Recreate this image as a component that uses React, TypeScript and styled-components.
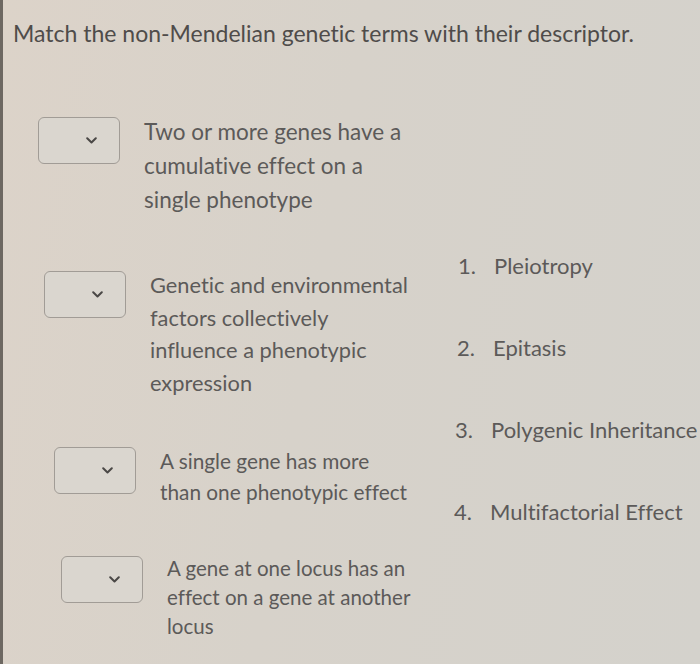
import React from 'react';
import styled, { createGlobalStyle } from 'styled-components';

const GlobalStyle = createGlobalStyle`
  html, body {
    margin: 0;
    padding: 0;
  }
  body {
    font-family: Lato, "Open Sans", "Liberation Sans", sans-serif;
    font-variant-ligatures: none;
  }
`;

const Page = styled.div`
  width: 700px;
  height: 664px;
  overflow: hidden;
  box-sizing: border-box;
  border-left: 3px solid #6d6862;
  background: linear-gradient(100deg, #dcd3c9 0%, #d7d2ca 45%, #d4d2cc 100%);
  color: #5a5857;
`;

const Title = styled.h1`
  margin: 0;
  padding: 18px 0 0 10px;
  font-size: 23px;
  font-weight: 400;
  line-height: 30px;
  color: #4f4c4a;
  white-space: nowrap;
`;

const Body = styled.div`
  display: grid;
  grid-template-columns: 410px 1fr;
  margin-top: 69px;
`;

const Prompts = styled.div`
  display: grid;
  grid-template-rows: 154px 176px 109px auto;
`;

const PromptRow = styled.div<{ $indent: number }>`
  display: flex;
  align-items: flex-start;
  padding-left: ${(p) => p.$indent}px;
`;

const Select = styled.div`
  flex: none;
  display: flex;
  align-items: center;
  justify-content: flex-end;
  width: 82px;
  height: 47px;
  box-sizing: border-box;
  padding-right: 22px;
  border: 1.5px solid #a19c96;
  border-radius: 6px;
  background: #dad6cf;
`;

const Descriptor = styled.div<{ $size: number; $leading: number }>`
  margin: -2px 0 0 24px;
  font-size: ${(p) => p.$size}px;
  line-height: ${(p) => p.$leading}px;
  color: #5c5a59;
  white-space: nowrap;
`;

const Terms = styled.ol`
  list-style: none;
  margin: 0;
  padding: 133px 0 0 43px;
  display: flex;
  flex-direction: column;
  gap: 50px;
`;

const Term = styled.li<{ $shift: number }>`
  display: flex;
  font-size: 22px;
  line-height: 32px;
  white-space: nowrap;
  color: #5c5a59;
  margin-left: ${(p) => p.$shift}px;
`;

const TermNumber = styled.span`
  width: 36px;
  flex: none;
`;

const Chevron = () => (
  <svg width="11" height="7" viewBox="0 0 11 7" fill="none">
    <path d="M1.2 1.2 L5.5 5.5 L9.8 1.2" stroke="#4a4846" strokeWidth="2" strokeLinecap="round" strokeLinejoin="round" />
  </svg>
);

const prompts = [
  { indent: 35, size: 22.5, leading: 34, lines: ['Two or more genes have a', 'cumulative effect on a', 'single phenotype'] },
  { indent: 41, size: 21.8, leading: 32.5, lines: ['Genetic and environmental', 'factors collectively', 'influence a phenotypic', 'expression'] },
  { indent: 51, size: 20.8, leading: 31, lines: ['A single gene has more', 'than one phenotypic effect'] },
  { indent: 58, size: 20.5, leading: 29, lines: ['A gene at one locus has an', 'effect on a gene at another', 'locus'] },
];

const terms = [
  { shift: 2, label: 'Pleiotropy' },
  { shift: 1, label: 'Epitasis' },
  { shift: -1, label: 'Polygenic Inheritance' },
  { shift: -2, label: 'Multifactorial Effect' },
];

export default function App() {
  return (
    <Page>
      <GlobalStyle />
      <Title>Match the non-Mendelian genetic terms with their descriptor.</Title>
      <Body>
        <Prompts>
          {prompts.map((p, i) => (
            <PromptRow key={i} $indent={p.indent}>
              <Select>
                <Chevron />
              </Select>
              <Descriptor $size={p.size} $leading={p.leading}>
                {p.lines.map((line, j) => (
                  <div key={j}>{line}</div>
                ))}
              </Descriptor>
            </PromptRow>
          ))}
        </Prompts>
        <Terms>
          {terms.map((t, i) => (
            <Term key={i} $shift={t.shift}>
              <TermNumber>{i + 1}.</TermNumber>
              {t.label}
            </Term>
          ))}
        </Terms>
      </Body>
    </Page>
  );
}
